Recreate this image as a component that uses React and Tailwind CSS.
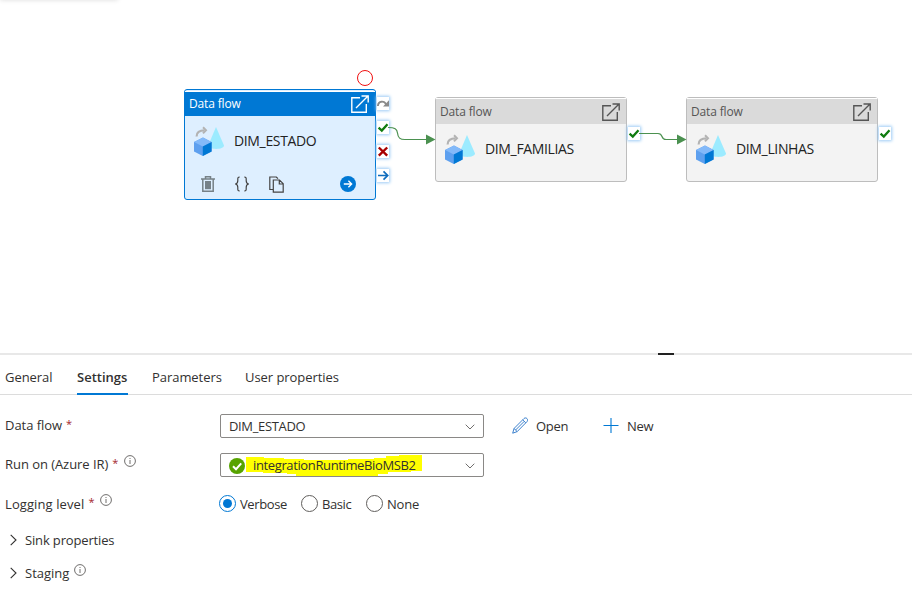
import React from 'react';
import clsx from 'clsx';

const nodes = [
  { id: 'estado', name: 'DIM_ESTADO', selected: true, place: 'left-[184px] top-[89px] h-[111px]' },
  { id: 'familias', name: 'DIM_FAMILIAS', place: 'left-[435px] top-[97px] h-[85px]' },
  { id: 'linhas', name: 'DIM_LINHAS', place: 'left-[686px] top-[97px] h-[85px]' },
];

const ports = [
  { id: 'skip', kind: 'skip', place: 'left-[377px] top-[97px]' },
  { id: 'ok1', kind: 'success', place: 'left-[377px] top-[121px]' },
  { id: 'fail', kind: 'fail', place: 'left-[377px] top-[145px]' },
  { id: 'done', kind: 'completion', place: 'left-[377px] top-[169px]' },
  { id: 'ok2', kind: 'success', place: 'left-[628px] top-[127px]' },
  { id: 'ok3', kind: 'success', place: 'left-[879px] top-[127px]' },
];

const DataFlowIcon = () => (
  <svg width="32" height="32" viewBox="0 0 32 32" aria-hidden="true">
    <path d="M2.6 11.5C2.4 7.5 5.5 5.3 10.5 5.3" fill="none" stroke="#b3b3b3" strokeWidth="2.2" />
    <path d="M9 2.2L12 5.2L9 8.4" fill="none" stroke="#b3b3b3" strokeWidth="2" />
    <path d="M22 2L30 20.6C30 25 15 25.2 14.2 20.6Z" fill="#9cebff" />
    <path d="M0 17L9 12.5L17.6 17V26.6L8.8 31L0 26.6Z" fill="#5ea0ef" />
    <path d="M0 17L9 12.5L17.6 17L8.8 21.4Z" fill="#83b9f9" />
    <path d="M17.6 17V26.6L8.8 31V21.4Z" fill="#0078d4" />
  </svg>
);

const OpenIcon = ({ className }) => (
  <svg width="18" height="18" viewBox="0 0 18 18" fill="none" stroke="currentColor" strokeWidth="1.4" className={className} aria-hidden="true">
    <path d="M9 2.7H.8V17.2H15.3V9M5 13L17 1M10.5 1H17.2V7.5" />
  </svg>
);

const PortGlyph = ({ kind }) => (
  <svg width="12" height="13" viewBox="0 0 12 13" fill="none" aria-hidden="true">
    {kind === 'skip' && (
      <>
        <path d="M.9 9C1.2 3.8 7 3.2 9.3 7.6" stroke="#8a8a8a" strokeWidth="1.9" />
        <path d="M12 3.2V9.5H6Z" fill="#8a8a8a" />
      </>
    )}
    {kind === 'success' && <path d="M1.6 6.6L4.8 9.6L10.5 3.2" stroke="#107c10" strokeWidth="2.3" />}
    {kind === 'fail' && <path d="M1.8 2.5L10.2 10.7M10.2 2.5L1.8 10.7" stroke="#a80000" strokeWidth="2.4" />}
    {kind === 'completion' && <path d="M1 6.5H10.5M6.5 2.3L10.7 6.5L6.5 10.7" stroke="#0f6cbd" strokeWidth="1.7" />}
  </svg>
);

const InfoIcon = () => (
  <svg width="12" height="12" viewBox="0 0 12 12" fill="none" stroke="#605e5c" strokeWidth=".9" aria-hidden="true">
    <circle cx="6" cy="6" r="5.4" />
    <path d="M6 5V9M6 3V4" />
  </svg>
);

const ChevronDown = () => (
  <svg width="10" height="6" viewBox="0 0 10 6" fill="none" stroke="#605e5c" strokeWidth=".9" className="mt-[2px]" aria-hidden="true">
    <path d="M.7 .7L5 5L9.3 .7" />
  </svg>
);

const ChevronRight = () => (
  <svg width="7" height="12" viewBox="0 0 7 12" fill="none" stroke="#323130" strokeWidth="1.1" className="-mt-[2px]" aria-hidden="true">
    <path d="M.7 .8L6 6L.7 11.2" />
  </svg>
);

const NodeActions = () => (
  <div className="mt-[9px] flex h-[18px] items-center pl-4 pr-[19px]">
    <svg width="14" height="16" viewBox="0 0 14 16" fill="none" stroke="#768187" strokeWidth="1.5" aria-hidden="true">
      <path d="M0 3H14M4.5 2.5V.8H9.5V2.5M1.8 3V15.2H12.2V3" />
      <path d="M4 5H10V13.2H4Z" fill="#768187" stroke="none" />
    </svg>
    <svg className="ml-5" width="14" height="16" viewBox="0 0 14 16" fill="none" stroke="#444" strokeWidth="1.2" aria-hidden="true">
      <path d="M4.7 1C2.5 1 2.8 2.3 2.8 4.5C2.8 6.5 2.5 7.5 .6 8C2.5 8.5 2.8 9.5 2.8 11.5C2.8 13.7 2.5 15 4.7 15M9.3 1C11.5 1 11.2 2.3 11.2 4.5C11.2 6.5 11.5 7.5 13.4 8C11.5 8.5 11.2 9.5 11.2 11.5C11.2 13.7 11.5 15 9.3 15" />
    </svg>
    <svg className="ml-5" width="15" height="17" viewBox="0 0 15 17" fill="none" stroke="#444" strokeWidth="1.2" aria-hidden="true">
      <path d="M4.2 13.5H.8V1H7.3L9 2.7M4.3 4H10.5L14.2 7.7V16.2H4.3ZM10.3 4V8H14.2" />
    </svg>
    <svg className="ml-auto" width="16" height="16" viewBox="0 0 16 16" fill="none" aria-hidden="true">
      <circle cx="8" cy="8" r="8" fill="#0078d4" />
      <path d="M3.8 8H11.6M8.4 4.7L11.7 8L8.4 11.3" stroke="white" strokeWidth="1.3" />
    </svg>
  </div>
);

const ActivityNode = ({ node }) => (
  <div
    className={clsx(
      'absolute w-[192px] rounded-[3px] border',
      node.place,
      node.selected ? 'border-[#0078d4] bg-[#deefff]' : 'border-[#bdbdbd] bg-[#f3f3f3]'
    )}
  >
    <div
      className={clsx(
        'flex items-center justify-between border-t pl-1 pr-[6px] text-[12px]',
        node.selected
          ? 'mt-px h-[25px] border-white bg-[#0078d4] font-medium text-white'
          : 'h-[26px] border-white bg-[#dadada] text-[#555]'
      )}
    >
      <span className="tracking-[-0.15px]">Data flow</span>
      <OpenIcon className={node.selected ? 'text-white' : 'mt-px text-[#555]'} />
    </div>
    <div className="flex h-[50px] items-center pl-[9px]">
      <DataFlowIcon />
      <span className="-mt-[2px] ml-2 text-[14px] tracking-[-0.35px] text-[#222]">{node.name}</span>
    </div>
    {node.selected && <NodeActions />}
  </div>
);

const Canvas = () => (
  <div className="relative h-[353px] overflow-hidden bg-white">
    <div className="absolute -top-2 left-0 h-2 w-[118px] shadow-[0_0_5px_rgba(0,0,0,0.14)]" />
    {nodes.map((node) => (
      <ActivityNode key={node.id} node={node} />
    ))}
    {ports.map((port) => (
      <div key={port.id} className={clsx('absolute h-[13px] w-3 bg-white shadow-[0_0_3px_1px_#9ccbf5]', port.place)}>
        <PortGlyph kind={port.kind} />
      </div>
    ))}
    <div className="absolute left-[357px] top-[70px] size-4 rounded-full border border-[#f01010]" />
    <svg className="absolute left-0 top-0" width="912" height="353" fill="none" stroke="#4b9150" strokeWidth="1.2" aria-hidden="true">
      <path d="M388 127.5C395 127.5 397 129 397.5 133C398 138 400 139.5 405 139.5H427" />
      <path d="M639 133.5H658C664 133.5 660 139.5 666 139.5H678" />
      <path d="M426 134.5L435.5 139.5L426 144.5ZM677 134.5L686.5 139.5L677 144.5Z" fill="#4b9150" stroke="none" />
    </svg>
  </div>
);

const tabs = [
  { name: 'General', className: 'w-[48px]' },
  { name: 'Settings', className: 'w-[51px]', active: true },
  { name: 'Parameters', className: 'w-[69px]' },
  { name: 'User properties', className: 'w-[95px]' },
];

const Tabs = () => (
  <div className="flex h-[40px] gap-6 border-b border-[#dcdcdc] pl-[5px]" role="tablist">
    {tabs.map((tab) => (
      <div
        key={tab.name}
        role="tab"
        aria-selected={!!tab.active}
        className={clsx(
          'h-[40px] whitespace-nowrap pt-[12px] leading-5',
          tab.className,
          tab.active ? 'border-b-2 border-[#0078d4] font-semibold' : 'tracking-[-0.05px]'
        )}
      >
        {tab.name}
      </div>
    ))}
  </div>
);

const Label = ({ children, info, className }) => (
  <div className="flex w-[215px] items-center font-medium">
    <span className={className}>{children}</span>
    <span className="-mt-[3px] ml-1 text-[11px] text-[#a4262c]">*</span>
    {info && <span className="-mt-[8px] ml-[6px]"><InfoIcon /></span>}
  </div>
);

const levels = [
  { name: 'Verbose', className: 'w-[46px] tracking-[-0.4px]' },
  { name: 'Basic', className: 'w-[29px] tracking-[-0.4px]' },
  { name: 'None', className: 'w-[31px] tracking-[-0.2px]' },
];

const SettingsForm = () => (
  <div className="pl-[5px]">
    <div className="mt-[19px] flex h-6 items-center">
      <Label className="tracking-[-0.05px]">Data flow</Label>
      <div className="flex h-6 w-[264px] items-center justify-between rounded-[2px] border border-[#8a8886] pl-2 pr-2">
        <span className="mt-px tracking-[-0.35px]">DIM_ESTADO</span>
        <ChevronDown />
      </div>
      <button className="ml-7 flex items-center gap-2">
        <svg width="16" height="17" viewBox="0 0 16 17" fill="none" stroke="#2673c7" strokeWidth=".9" className="-mt-[2px]" aria-hidden="true">
          <path d="M.7 16.2L2 11.5L12 1.5C14 -.3 17 2.5 15 4.6L5.2 14.6L.7 16.2ZM2 11.5L5.2 14.6M10.7 2.8L13.8 5.9M3.6 13L12.2 4.4" />
        </svg>
        <span className="mt-px w-[32px] tracking-[-0.3px]">Open</span>
      </button>
      <button className="ml-[35px] flex items-center gap-2">
        <svg width="16" height="16" viewBox="0 0 16 16" stroke="#0078d4" strokeWidth="1.1" className="-mt-px" aria-hidden="true">
          <path d="M.5 7.5H15.5M8 0V15" />
        </svg>
        <span className="mt-px tracking-[-0.3px]">New</span>
      </button>
    </div>

    <div className="mt-[15px] flex h-6 items-center">
      <Label info className="tracking-[-0.05px]">Run on (Azure IR)</Label>
      <div className="relative flex h-6 w-[264px] items-center rounded-[2px] border border-[#8a8886] pl-2 pr-2">
        <svg className="absolute -top-px left-[25px]" width="177" height="24" aria-hidden="true">
          <path d="M0 4H18V5H38V6H58V7H102V6H128V5H140V3H153V2H176V18H165V19H142V21H132V23H50V21H41V20H17V19H0Z" fill="#ff0" />
        </svg>
        <svg className="relative mt-px" width="16" height="16" viewBox="0 0 16 16" fill="none" aria-hidden="true">
          <circle cx="8" cy="8" r="8" fill="#57a300" />
          <path d="M4 8.3L7 11.2L12.2 5.3" stroke="white" strokeWidth="2" />
        </svg>
        <span className="relative ml-2 mt-px grow tracking-[-0.37px]">integrationRuntimeBioMSB2</span>
        <ChevronDown />
      </div>
    </div>

    <div className="mt-[15px] flex h-6 items-center">
      <Label info className="mt-[2px] tracking-[0.1px]">Logging level</Label>
      <div className="-ml-px flex gap-[15px]">
        {levels.map((level, index) => (
          <label key={level.name} className="flex items-center gap-1">
            <span className="-mt-px flex size-[17px] items-center justify-center rounded-full border border-[#605e5c] has-[span]:border-[#0078d4]">
              {index === 0 && <span className="size-[9px] rounded-full bg-[#0078d4]" />}
            </span>
            <span className={clsx('mt-px', level.className)}>{level.name}</span>
          </label>
        ))}
      </div>
    </div>

    <div className="mt-[15px] flex h-5 items-center gap-2 pl-[5px] font-medium">
      <ChevronRight />
      <span className="tracking-[-0.15px]">Sink properties</span>
    </div>
    <div className="mt-[13px] flex h-5 items-center gap-2 pl-[5px] font-medium">
      <ChevronRight />
      <span>Staging</span>
      <span className="-ml-[3px] -mt-[9px]"><InfoIcon /></span>
    </div>
  </div>
);

const App = () => (
  <div className="h-[594px] w-[912px] overflow-hidden bg-white font-['Open_Sans','Noto_Sans',sans-serif] text-[13px] text-[#323130]">
    <Canvas />
    <div className="h-[2px] bg-[#e8e8e8]">
      <div className="ml-[658px] h-[2px] w-4 bg-[#222]" />
    </div>
    <Tabs />
    <SettingsForm />
  </div>
);

export default App;
